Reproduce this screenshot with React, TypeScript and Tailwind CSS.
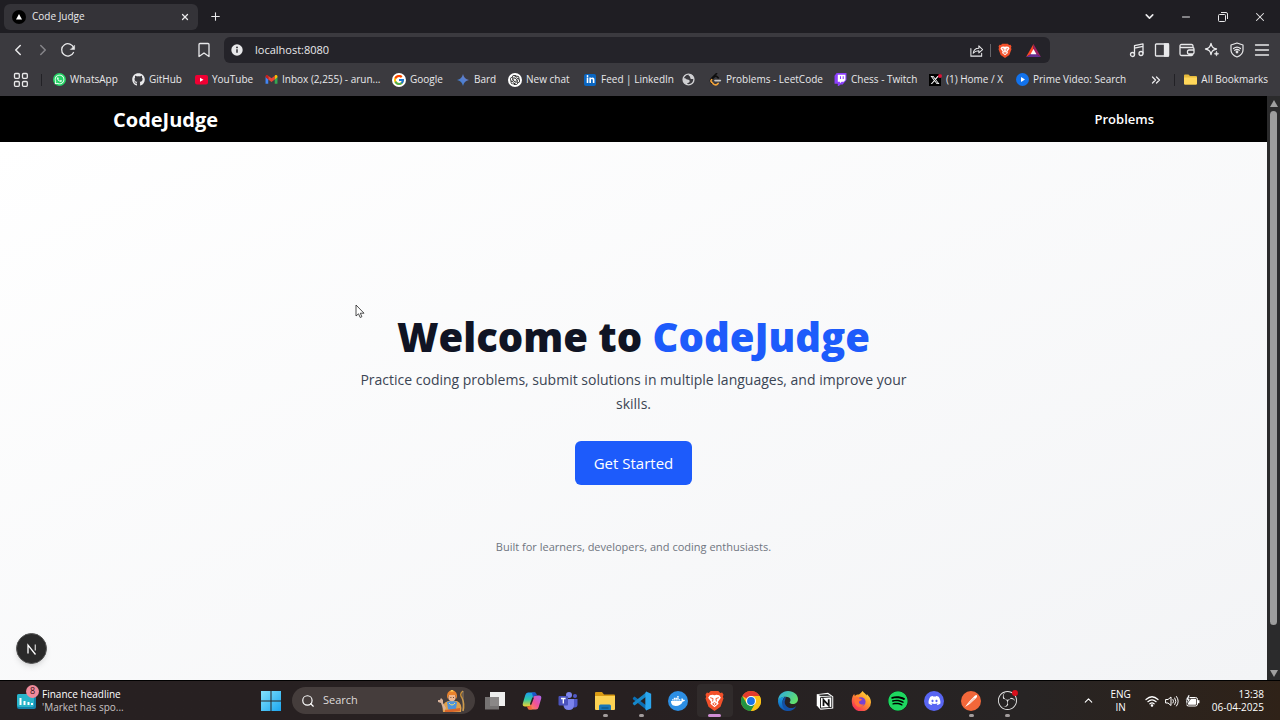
import type { ReactNode } from "react";
import { ChevronDown, ChevronLeft, ChevronRight, ChevronUp, Minus, Plus, X, Search } from "lucide-react";
import { FcGoogle } from "react-icons/fc";
import { FaGithub, FaLinkedinIn, FaSpotify, FaDocker, FaDiscord, FaWhatsapp } from "react-icons/fa";
import { SiOpenai, SiObsstudio } from "react-icons/si";

const XLogo = () => (
  <span className="relative flex size-3 items-center justify-center bg-black text-white">
    <svg viewBox="0 0 24 24" className="size-[10px]" fill="currentColor">
      <path d="M18.2 2.3h3.3l-7.2 8.2 8.5 11.3h-6.7l-5.2-6.8-6 6.8H1.700l7.700-8.800L1.200 2.300H8l4.700 6.200zm-1.100 17.500h1.800L7.100 4.100h-2z" />
    </svg>
    <span className="absolute -right-px top-0 size-1 rounded-full bg-[#d9163a]" />
  </span>
);

const WhatsApp = () => (
  <span className="flex size-[13px] items-center justify-center rounded-full bg-[#25d366] text-white">
    <FaWhatsapp size={11} />
  </span>
);

const YouTube = () => (
  <svg viewBox="0 0 13 13" className="size-[13px]">
    <rect x="0" y="2" width="13" height="9.500" rx="2" fill="#f00033" />
    <path d="M5 4.700v4l3.500-2z" fill="#fff" />
  </svg>
);

const Gmail = () => (
  <svg viewBox="0 0 24 24" className="size-[13px]">
    <path d="M1 6.500V20h5V10.500z" fill="#4285f4" />
    <path d="M23 6.500V20h-5V10.500z" fill="#34a853" />
    <path d="M6 5v7l6 4.500 6-4.500V5l-6 4.600z" fill="#ea4335" />
    <path d="M1 6.500c0-2.600 2.600-3.500 4.300-2.200L6 5v7L1 8z" fill="#c5221f" />
    <path d="M23 6.500c0-2.600-2.600-3.500-4.300-2.200L18 5v7l5-4z" fill="#fbbc04" />
  </svg>
);

const Bard = () => (
  <svg viewBox="0 0 24 24" className="size-3">
    <defs>
      <linearGradient id="bard" x1="0" y1="1" x2="1" y2="0">
        <stop offset="0" stopColor="#2f7fd8" />
        <stop offset="1" stopColor="#7a80c8" />
      </linearGradient>
    </defs>
    <path d="M12 0c1.500 7 5 10.500 12 12-7 1.500-10.500 5-12 12-1.500-7-5-10.500-12-12 7-1.500 10.500-5 12-12z" fill="url(#bard)" />
  </svg>
);

const OpenAI = () => (
  <span className="flex size-[14px] items-center justify-center rounded-full bg-white text-black">
    <SiOpenai size={10} />
  </span>
);

const LinkedIn = () => (
  <span className="flex size-3 items-center justify-center rounded-xs bg-[#0a66c2] text-white">
    <FaLinkedinIn size={9} />
  </span>
);

const Globe = () => (
  <svg viewBox="0 0 24 24" className="size-[13px]">
    <circle cx="12" cy="12" r="10" fill="#3b3a3f" stroke="#d0d0d3" strokeWidth="2.500" />
    <path d="M3 9c4 0 4 2 7 3s5 1 4 4-3 1-4 3l-1 2C5 20 2 17 2 12zM14 2c-3 2-2 3 0 4s0 4 3 5 3-1 5 0C22 6 18 3 14 2z" fill="#d0d0d3" />
  </svg>
);

const Leet = () => (
  <svg viewBox="0 0 24 24" className="size-[13px]">
    <path d="M14 1 5 10c-3 3-3 6 0 9" fill="none" stroke="#0e0e0e" strokeWidth="3" strokeLinecap="round" />
    <path d="m17 19-2 2c-2 2-4 1-6 0l-4-4" fill="none" stroke="#f2a33a" strokeWidth="3" strokeLinecap="round" />
    <path d="m17 9-2-2c-2-2-4-1-5 0l-5 5" fill="none" stroke="#0e0e0e" strokeWidth="3" strokeLinecap="round" />
    <path d="M5 12c-2 2-2 4 0 5" fill="none" stroke="#f2a33a" strokeWidth="3" strokeLinecap="round" />
    <path d="M11 14h10" stroke="#c8c8c8" strokeWidth="3" strokeLinecap="round" />
  </svg>
);

const Twitch = () => (
  <svg viewBox="0 0 24 24" className="size-[13px]">
    <path d="M1 5 5 0h18v13l-7 8h-4l-3 3H7v-4H1z" fill="#8c3ffc" />
    <path d="M7 3h14v10l-3 3h-4l-3 3v-3H7z" fill="#fff" />
    <path d="M12 6v5M17 6v5" stroke="#8c3ffc" strokeWidth="2" />
  </svg>
);

const Prime = () => (
  <svg viewBox="0 0 13 13" className="size-[13px]">
    <circle cx="6.500" cy="6.500" r="6.500" fill="#1272ec" />
    <path d="M5 4v5l4-2.500z" fill="#fff" />
  </svg>
);

const Folder = () => (
  <svg viewBox="0 0 13 11" className="h-[11px] w-[13px]">
    <path d="M0 1.500Q0 .5 1 .5h3.500l1.500 1.500h6q1 0 1 1v6.500q0 1-1 1H1q-1 0-1-1z" fill="#e5b93c" />
    <path d="M0 3.500h13v6q0 1-1 1H1q-1 0-1-1z" fill="#ffd75a" />
  </svg>
);

const bookmarks: { label: string; name?: string; icon: ReactNode; width: string }[] = [
  { label: "WhatsApp", icon: <WhatsApp />, width: "w-[79px]" },
  { label: "GitHub", icon: <FaGithub size={13} />, width: "w-[63px]" },
  { label: "YouTube", icon: <YouTube />, width: "w-[70px]" },
  { label: "Inbox (2,255) - arun...", icon: <Gmail />, width: "w-[128px]" },
  {
    label: "Google",
    icon: <span className="flex size-[14px] items-center justify-center rounded-full bg-white"><FcGoogle size={12} /></span>,
    width: "w-[64px]",
  },
  { label: "Bard", icon: <Bard />, width: "w-[52px]" },
  { label: "New chat", icon: <OpenAI />, width: "w-[75px]" },
  { label: "Feed | LinkedIn", icon: <LinkedIn />, width: "w-[98px]" },
  { label: "", name: "Saved page", icon: <Globe />, width: "w-[27px]" },
  { label: "Problems - LeetCode", icon: <Leet />, width: "w-[125px]" },
  { label: "Chess - Twitch", icon: <Twitch />, width: "w-[95px]" },
  { label: "(1) Home / X", icon: <XLogo />, width: "w-[87px]" },
  { label: "Prime Video: Search", icon: <Prime />, width: "w-[112px]" },
];

const stroke = { fill: "none", stroke: "currentColor", strokeWidth: 1.3, strokeLinecap: "round", strokeLinejoin: "round" } as const;

const ReloadIcon = () => (
  <svg viewBox="0 0 16 16" className="size-4" {...stroke}>
    <path d="M13.500 10.500A6.200 6.200 0 1 1 13.800 6" />
    <path d="M14.600 3.500v4h-4z" fill="currentColor" strokeWidth=".5" />
  </svg>
);
const BookmarkIcon = () => (
  <svg viewBox="0 0 16 16" className="size-4" {...stroke}>
    <path d="M3 2.500q0-1 1-1h8q1 0 1 1v12l-5-3.500-5 3.500z" />
  </svg>
);
const InfoIcon = () => (
  <svg viewBox="0 0 12 12" className="size-3 shrink-0">
    <circle cx="6" cy="6" r="5.700" fill="#e8e8ea" />
    <path d="M6 5.300v3.400" stroke="#242329" strokeWidth="1.400" />
    <circle cx="6" cy="3.400" r=".9" fill="#242329" />
  </svg>
);
const ShareIcon = () => (
  <svg viewBox="0 0 16 16" className="size-[15px]" {...stroke} strokeWidth={1.100}>
    <path d="M2 6v8h11.500v-3" />
    <path d="M4.500 11c.3-3.500 2.500-5.500 6-5.500V3l4 4-4 3.500V8.300c-2.500 0-4.500.7-6 2.700z" />
  </svg>
);
const BatIcon = () => (
  <svg viewBox="0 0 16 14" className="h-[13px] w-[15px]">
    <path d="M8 0 0 14l8-4.500z" fill="#ff4724" />
    <path d="M8 0l8 14-8-4.500z" fill="#9e1f63" />
    <path d="M0 14h16L8 9z" fill="#662d91" />
    <path d="M8 5.500 4.800 11h6.400z" fill="#fff" />
  </svg>
);
const MusicIcon = () => (
  <svg viewBox="0 0 16 16" className="size-4" {...stroke}>
    <path d="M5.500 12.500V3.700L14 1.800v9.200M5.500 6.200 14 4.300" />
    <circle cx="3.500" cy="12.500" r="2" />
    <circle cx="12" cy="11.500" r="2" />
  </svg>
);
const PanelIcon = () => (
  <svg viewBox="0 0 16 16" className="size-4" {...stroke}>
    <rect x="1.500" y="2" width="13" height="12" rx=".8" />
    <path d="M10.500 2h4v12h-4z" fill="currentColor" />
  </svg>
);
const WalletIcon = () => (
  <svg viewBox="0 0 16 16" className="size-4" {...stroke}>
    <path d="M14 5.500V4q0-1.500-1.500-1.500h-10Q1 2.500 1 4v8q0 1.500 1.500 1.500h10Q14 13.500 14 12M1 4.500q.3 1 1.500 1H13.500q1.500 0 1.500 1.500v3.500q0 1.500-1.500 1.500H10q-1.500 0-1.500-1.500V9.500Q8.500 8 10 8h5" />
  </svg>
);
const SparkIcon = () => (
  <svg viewBox="0 0 16 16" className="size-4" {...stroke}>
    <path d="M7 1.500c.7 3.500 1.800 4.600 5.500 5.500C8.800 7.900 7.700 9 7 12.500 6.300 9 5.200 7.900 1.500 7 5.200 6.100 6.300 5 7 1.500z" />
    <path d="M12.500 9.500c.3 1.500.8 2 2.300 2.300-1.500.3-2 .8-2.300 2.300-.3-1.500-.8-2-2.300-2.300 1.500-.3 2-.8 2.300-2.300z" fill="currentColor" strokeWidth=".6" />
  </svg>
);
const VpnIcon = () => (
  <svg viewBox="0 0 16 16" className="size-4" {...stroke} strokeWidth={1.200}>
    <path d="M8 1 14 3v5c0 3.500-2.500 5.700-6 7-3.500-1.300-6-3.500-6-7V3z" />
    <path d="M4.500 6.500q3.500-2.800 7 0M5.700 8.300q2.300-1.800 4.600 0" />
    <circle cx="8" cy="10" r=".8" fill="currentColor" />
  </svg>
);
const MenuIcon = () => (
  <svg viewBox="0 0 16 16" className="size-4" {...stroke}>
    <path d="M1.500 3h13M1.500 8h13M1.500 13h13" />
  </svg>
);
const AppsIcon = () => (
  <svg viewBox="0 0 16 16" className="size-4" {...stroke}>
    <rect x="1.500" y="1.500" width="4.800" height="4.800" rx="1" />
    <rect x="9.500" y="1.500" width="4.800" height="4.800" rx="1" />
    <rect x="1.500" y="9.500" width="4.800" height="4.800" rx="1" />
    <rect x="9.500" y="9.500" width="4.800" height="4.800" rx="1" />
  </svg>
);
const MoreIcon = () => (
  <svg viewBox="0 0 10 10" className="size-[10px]" {...stroke}>
    <path d="M1.500 2 4.500 5l-3 3M5.500 2l3 3-3 3" />
  </svg>
);
const RestoreIcon = () => (
  <svg viewBox="0 0 10 10" className="size-[10px]" fill="none" stroke="currentColor">
    <rect x=".5" y="2.500" width="7" height="7" rx="1" />
    <path d="M3 .5h5q1.500 0 1.500 1.500v5" />
  </svg>
);
const BraveLion = ({ className }: { className: string }) => (
  <svg viewBox="0 0 20 22" className={className}>
    <path d="M6 1h8l2 2 2-.3L19.500 5l-.7 2 .7 2-3.200 8.500L10 22l-6.300-4.500L.5 9l.7-2-.7-2L2 2.700 4 3z" fill="#f2502a" />
    <path d="M5 5.500 8 5l2 .5L12 5l3 .5L16.700 8l-3.200 4.500.8 2L10 18l-4.300-3.500.8-2L3.300 8z" fill="#fff" />
    <path d="m5.500 8 3 1-.5 3M14.500 8l-3 1 .5 3M8 14.500l2-1.200 2 1.200-2 1.500z" stroke="#f2502a" strokeWidth="1" fill="none" />
  </svg>
);

function IconButton({ label, children }: { label: string; children: ReactNode }) {
  return (
    <button type="button" aria-label={label} className="flex size-5 shrink-0 items-center justify-center">
      {children}
    </button>
  );
}

function BrowserChrome() {
  return (
    <header className="text-[#e9e9eb]">
      <div className="flex h-[33px] items-center bg-[#1f1e23] pl-1">
        <div className="flex h-[26px] w-[194px] items-center rounded-md bg-[#343338] pl-2 pr-[3px]">
          <svg viewBox="0 0 14 14" className="size-[14px]">
            <circle cx="7" cy="7" r="7" fill="#000" />
            <path d="M7 4 10 9.500H4z" fill="#fff" />
          </svg>
          <span className="ml-[6px] flex-1 text-[10px]">Code Judge</span>
          <IconButton label="Close tab"><X size={10} strokeWidth={3} /></IconButton>
        </div>
        <div className="ml-[7px]"><IconButton label="New tab"><Plus size={13} strokeWidth={2} /></IconButton></div>
        <div className="ml-auto flex items-center gap-[17px] pr-[10px]">
          <IconButton label="Search tabs"><ChevronDown size={13} strokeWidth={3} /></IconButton>
          <IconButton label="Minimize"><Minus size={12} strokeWidth={2} /></IconButton>
          <IconButton label="Restore"><RestoreIcon /></IconButton>
          <IconButton label="Close window"><X size={14} strokeWidth={1.800} /></IconButton>
        </div>
      </div>
      <div className="flex h-[34px] items-center bg-[#3b3a3f] pl-2 pr-2">
        <div className="flex items-center gap-[5px]">
          <IconButton label="Back"><ChevronLeft size={18} strokeWidth={2} /></IconButton>
          <span className="text-[#86858a]"><IconButton label="Forward"><ChevronRight size={18} strokeWidth={2} /></IconButton></span>
          <IconButton label="Reload"><ReloadIcon /></IconButton>
        </div>
        <div className="ml-[116px]"><IconButton label="Bookmark this page"><BookmarkIcon /></IconButton></div>
        <div className="ml-[10px] mr-[77px] flex h-[26px] flex-1 items-center gap-[5px] rounded-md bg-[#242329] pl-[7px] pr-[7px]">
          <InfoIcon />
          <input aria-label="Address" defaultValue="localhost:8080" className="ml-[7px] min-w-0 flex-1 bg-transparent text-[11px] outline-none" />
          <IconButton label="Share"><ShareIcon /></IconButton>
          <span className="-mx-px h-[13px] w-px bg-[#66656a]" />
          <IconButton label="Brave Shields"><BraveLion className="h-[15px] w-[14px]" /></IconButton>
          <span className="ml-[3px]"><IconButton label="Rewards"><BatIcon /></IconButton></span>
        </div>
        <div className="flex items-center gap-[5px]">
          <IconButton label="Media"><MusicIcon /></IconButton>
          <IconButton label="Sidebar"><PanelIcon /></IconButton>
          <IconButton label="Wallet"><WalletIcon /></IconButton>
          <IconButton label="Assistant"><SparkIcon /></IconButton>
          <IconButton label="VPN"><VpnIcon /></IconButton>
          <IconButton label="Menu"><MenuIcon /></IconButton>
        </div>
      </div>
      <nav aria-label="Bookmarks" className="flex h-[29px] items-center bg-[#3b3a3f] pb-1 pl-[11px] pr-3 text-[10px] whitespace-nowrap">
        <IconButton label="Apps"><AppsIcon /></IconButton>
        <span className="mx-[10px] h-3 w-px bg-[#222126]" />
        {bookmarks.map((b) => (
          <a key={b.label} href="#" aria-label={b.name} className={`flex shrink-0 items-center gap-1 ${b.width}`}>
            <span className="flex w-[14px] shrink-0 justify-center">{b.icon}</span>
            {b.label}
          </a>
        ))}
        <div className="ml-auto flex items-center">
          <IconButton label="More bookmarks"><MoreIcon /></IconButton>
          <span className="ml-2 mr-[9px] h-3 w-px bg-[#222126]" />
          <a href="#" className="flex items-center gap-1"><Folder />All Bookmarks</a>
        </div>
      </nav>
    </header>
  );
}

function Page() {
  return (
    <div className="flex min-w-0 flex-1 flex-col">
      <header className="flex h-[46px] items-center justify-between bg-black pl-[113px] pr-[113px] pt-[2px] text-white">
        <a href="#" className="text-[20px] font-bold">CodeJudge</a>
        <a href="#" className="text-[13px] font-semibold">Problems</a>
      </header>
      <main className="relative flex flex-1 flex-col items-center bg-linear-to-br from-white to-[#f3f4f6] pt-[171px] text-center">
        <h1 className="text-[40px] leading-[48px] font-extrabold text-[#101424]">
          Welcome to <span className="text-[#1d5bfb]">CodeJudge</span>
        </h1>
        <p className="mt-[7px] w-[576px] text-[14px] leading-6 text-[#3b4554]">
          Practice coding problems, submit solutions in multiple languages, and improve your skills.
        </p>
        <a href="#" className="mt-[25px] flex h-11 w-[117px] items-center justify-center rounded-md bg-[#1d5bfb] text-[15px] font-medium text-white">
          Get Started
        </a>
        <p className="mt-[52px] text-[11px] leading-5 text-[#6f7580]">Built for learners, developers, and coding enthusiasts.</p>
        <button
          type="button"
          aria-label="Next.js dev tools"
          className="absolute bottom-4 left-4 flex size-[31px] items-center justify-center rounded-full border border-[#555] bg-[#2a2a2a] shadow-md"
        >
          <svg viewBox="0 0 14 14" className="size-[14px]" fill="none" stroke="#fff" strokeWidth="1.300">
            <path d="M3 11.500V3l7.500 9.500" />
            <path d="M10.300 2.500v6" strokeOpacity=".75" />
          </svg>
        </button>
        <svg viewBox="0 0 10 15" className="absolute left-[355px] top-[162px] h-[15px] w-[10px]" fill="#fff" stroke="#222" strokeWidth=".8">
          <path d="M1 1v11l2.500-2.200L5.200 13.500l1.700-.8-1.600-3.500H9z" />
        </svg>
      </main>
    </div>
  );
}

function Scrollbar() {
  return (
    <div aria-hidden="true" className="flex w-[13px] flex-col items-center bg-[#2b2b2c]">
      <svg viewBox="0 0 12 15" className="h-[15px] w-3"><path d="M2 11 6 4l4 7z" fill="#a0a0a0" /></svg>
      <div className="w-[7px] flex-[514] rounded-full bg-[#9d9d9d]" />
      <div className="flex-[40]" />
      <svg viewBox="0 0 12 15" className="h-[15px] w-3"><path d="M2 5h8l-4 7z" fill="#a0a0a0" /></svg>
    </div>
  );
}

const WindowsLogo = () => (
  <svg viewBox="0 0 20 20" className="size-5">
    <defs>
      <linearGradient id="win" x1="0" y1="0" x2="1" y2="1">
        <stop offset="0" stopColor="#84e3fb" />
        <stop offset="1" stopColor="#1ba5ef" />
      </linearGradient>
    </defs>
    <path d="M0 0h9.500v9.500H0zM10.500 0H20v9.500h-9.500zM0 10.500h9.500V20H0zM10.500 10.500H20V20h-9.500z" fill="url(#win)" />
  </svg>
);
const TaskView = () => (
  <svg viewBox="0 0 22 20" className="h-5 w-[22px]">
    <rect x="6" y="1" width="15" height="14" fill="#eee" />
    <rect x="1" y="6" width="14" height="12.500" fill="#7e7b7b" fillOpacity=".9" />
  </svg>
);
const Copilot = () => (
  <svg viewBox="0 0 20 20" className="size-5">
    <defs>
      <linearGradient id="cpA" x1="0" y1="0" x2="0" y2="1">
        <stop offset="0" stopColor="#1b9bf0" />
        <stop offset=".5" stopColor="#31c9a4" />
        <stop offset="1" stopColor="#f5d22d" />
      </linearGradient>
      <linearGradient id="cpB" x1="1" y1="0" x2="0" y2="1">
        <stop offset="0" stopColor="#a869f3" />
        <stop offset=".5" stopColor="#f0509b" />
        <stop offset="1" stopColor="#ff9a3c" />
      </linearGradient>
    </defs>
    <path d="M6 1.500h7.500L9.500 12q-.8 3.500-3.500 3.500H3Q.2 15.500.8 12.500L3.300 4Q4 1.500 6 1.500z" fill="url(#cpA)" />
    <path d="M14 18.500H6.500L10.500 8q.8-3.500 3.500-3.500h3q2.800 0 2.200 3L16.700 16q-.7 2.500-2.700 2.500z" fill="url(#cpB)" />
    <path d="M10 1.500h2.500q1.500 0 2 1.500l.6 1.500H14q-2.300 0-3 2z" fill="#1c55c8" />
    <path d="M10 18.500H7.500q-1.500 0-2-1.500l-.6-1.500H6q2.300 0 3-2z" fill="#ef6a3c" />
    <path d="m11 7-2.200 6" stroke="#272021" strokeWidth="1.600" strokeLinecap="round" />
  </svg>
);
const Teams = () => (
  <svg viewBox="0 0 20 20" className="size-5">
    <circle cx="11" cy="4" r="3" fill="#7b83eb" />
    <circle cx="17" cy="5" r="2" fill="#5059c9" />
    <path d="M14 8h5.500v5.500q0 3-3 3H14z" fill="#5059c9" />
    <path d="M5.500 8H16v6q0 5-5.200 5T5.500 14z" fill="#7b83eb" />
    <rect x=".5" y="5" width="9.500" height="9.500" rx="1" fill="#4b53bc" />
    <path d="M3 7.500h4.600M5.300 7.500v5" stroke="#fff" strokeWidth="1.300" />
  </svg>
);
const Explorer = () => (
  <svg viewBox="0 0 22 20" className="h-5 w-[22px]">
    <path d="M1 2q0-1 1-1h6l2 2.500h10q1 0 1 1V8H1z" fill="#d99b14" />
    <path d="M1 5h20v13q0 1-1 1H2q-1 0-1-1z" fill="#fcd253" />
    <path d="M5 19v-4q0-1.500 1.500-1.500h9Q17 13.500 17 15v4z" fill="#1976b8" />
    <path d="M7.500 17h7" stroke="#0e527f" strokeWidth="1.200" />
  </svg>
);
const VsCode = () => (
  <svg viewBox="0 0 24 24" className="size-5">
    <path d="M1 8.500 3 6.700 18 18v5L1.200 9.800z" fill="#0b6fb5" />
    <path d="M1 15.500 3 17.300 18 6V1L1.200 14.200z" fill="#1688ca" />
    <path d="M17 .5 23 3.300v17.400L17 23.500l-1-2V2.500z" fill="#2ba6ee" />
  </svg>
);
const Chrome = () => (
  <svg viewBox="0 0 24 24" className="size-5">
    <circle cx="12" cy="12" r="12" fill="#fbc116" />
    <path d="M12 12 1.600 6A12 12 0 0 1 22.400 6z" fill="#e33b2e" />
    <path d="M1.600 6A12 12 0 0 0 12 24l5.200-9-10.400 0z" fill="#229342" />
    <path d="M12 24A12 12 0 0 0 22.400 6H12l5.200 9z" fill="#fbc116" />
    <circle cx="12" cy="12" r="6" fill="#fff" />
    <circle cx="12" cy="12" r="4.700" fill="#1a73e8" />
  </svg>
);
const Edge = () => (
  <svg viewBox="0 0 24 24" className="size-5">
    <defs>
      <linearGradient id="edA" x1="0" y1="0" x2="1" y2=".5">
        <stop offset="0" stopColor="#2aa8e8" />
        <stop offset="1" stopColor="#61df6e" />
      </linearGradient>
      <linearGradient id="edB" x1="0" y1="0" x2="0" y2="1">
        <stop offset="0" stopColor="#1b9de2" />
        <stop offset="1" stopColor="#0d55b4" />
      </linearGradient>
    </defs>
    <path d="M0 12C0 5 5.500 0 12 0c7 0 12 4.500 12 9.500 0 4-3 6-6 6-2.500 0-4-.8-4-1.800 0-.8 1-1.200 1-3C15 8.500 12.500 7 9 7c-4 0-8 2-9 5z" fill="url(#edA)" />
    <path d="M0 12c1-4 5-5 9-5-2.500 1-4 4-3.500 7.500C6 19.500 10 23 15 23.500 7 25.500 0 20 0 12z" fill="url(#edB)" />
    <path d="M8.500 11c-2 5 3 9.500 7 9.500 3 0 5-1 6.500-2.500C20 22 16.500 24 12.500 24 7 23 4 18 5.500 13c.5-3 2-5 4.500-6-.5 1-1 2-1.500 4z" fill="#1450a4" />
  </svg>
);
const Notion = () => (
  <svg viewBox="0 0 24 24" className="size-[18px]">
    <path d="M1 3 16 1l7 5v16L6 23.500 1 18z" fill="#fff" />
    <path d="M6 7.500 21 6.500v14L6 21.500z" fill="#fff" stroke="#111" strokeWidth="1.200" />
    <path d="M10 18.500V10.500l7 7.500V9.500" fill="none" stroke="#111" strokeWidth="2.400" />
    <path d="M3 3.700 15.500 2.700 19.500 5 6.500 5.800z" fill="#333" />
  </svg>
);
const Firefox = () => (
  <svg viewBox="0 0 24 24" className="size-5">
    <defs>
      <linearGradient id="ff" x1="1" y1="0" x2=".2" y2="1">
        <stop offset="0" stopColor="#fff044" />
        <stop offset=".45" stopColor="#ff9a2b" />
        <stop offset="1" stopColor="#f5265a" />
      </linearGradient>
    </defs>
    <path d="M14 0c1 2 4 3.500 5 5.500V3.500c3 3 5 6 5 10A11.500 11 0 0 1 1 13.500C.5 9 2 5 4 3.500c0 1 .3 1.700.7 2.500C6 4.500 8 4 9.500 4.200 11 3 12.500 2 14 0z" fill="url(#ff)" />
    <circle cx="12" cy="13" r="5.500" fill="#7742d3" />
    <path d="M4.700 8C7 6.500 9 7.500 10 9c2 .2 3 .7 3 1.500-1 1.500-3 1-3.500 2.500-.3 3 3.500 4 6 2.500-1 3-4 4-6.500 3.500C5 18 3 12 4.700 8z" fill="#ff7139" />
  </svg>
);
const Postman = () => (
  <svg viewBox="0 0 20 20" className="size-5">
    <circle cx="10" cy="10" r="10" fill="#f2673a" />
    <path d="m4 16 3.800-5L13.500 5q2-1.500 2.500-.5t-.8 2.500L9 12.700z" fill="#fff" />
    <path d="m8 12.500 5.500-5.500" stroke="#f2673a" strokeWidth=".6" />
  </svg>
);
const Archer = () => (
  <svg viewBox="0 0 30 22" className="h-[22px] w-[30px]">
    <path d="M26 1q-4 3-1 7 3 6 1 13" stroke="#c98f35" strokeWidth="1.400" fill="none" />
    <path d="M26 1v20" stroke="#d9c39a" strokeWidth=".5" />
    <path d="M6 22q-2-9 5-11h9q6 3 4 11z" fill="#e2a04a" />
    <path d="M10 12q5-2 10 0l-1 7-4 3-4-3z" fill="#4f93dc" />
    <circle cx="15" cy="7.500" r="3.700" fill="#f0b78e" />
    <path d="M10 9Q9 1 15 0q6 1 5 9l-2-4h-6z" fill="#e9832c" />
    <path d="M13 1.500h4L15-.5z" fill="#ffd75a" />
    <path d="M12 13q3 4 6 0" stroke="#f6dc6c" strokeWidth="1" fill="none" />
    <path d="m8 20 8-1 7-1v3l-8 1H8z" fill="#d9662a" />
    <path d="M7 21 4 13l-3-1v-2h2l1-2 2 2v3l3 5z" fill="#d9b39b" />
    <path d="M13.500 7.500h.8M16 7.500h.8" stroke="#3b2417" strokeWidth=".9" />
  </svg>
);

const apps: { name: string; icon: ReactNode; mark?: "open" | "active" }[] = [
  { name: "Task view", icon: <TaskView /> },
  { name: "Copilot", icon: <Copilot /> },
  { name: "Teams", icon: <Teams /> },
  { name: "File Explorer", icon: <Explorer />, mark: "open" },
  { name: "Visual Studio Code", icon: <VsCode />, mark: "open" },
  {
    name: "Docker",
    icon: <span className="flex size-5 items-center justify-center rounded-full bg-[#2c8ee3] text-white"><FaDocker size={14} /></span>,
  },
  { name: "Brave", icon: <BraveLion className="h-[21px] w-[19px]" />, mark: "active" },
  { name: "Chrome", icon: <Chrome /> },
  { name: "Edge", icon: <Edge /> },
  { name: "Notion", icon: <Notion /> },
  { name: "Firefox", icon: <Firefox /> },
  { name: "Spotify", icon: <span className="rounded-full bg-black"><FaSpotify size={20} color="#1ed760" /></span> },
  {
    name: "Discord",
    icon: <span className="flex size-5 items-center justify-center rounded-full bg-[#5865f2] text-white"><FaDiscord size={13} /></span>,
  },
  { name: "Postman", icon: <Postman />, mark: "open" },
  {
    name: "OBS Studio",
    icon: (
      <span className="relative">
        <SiObsstudio size={19} color="#e6e6e6" />
        <span className="absolute -right-px -top-px size-[6px] rounded-full bg-[#d8101c]" />
      </span>
    ),
    mark: "open",
  },
];

function Taskbar() {
  return (
    <footer className="flex h-10 items-center border-t border-black bg-linear-to-r from-[#272021] from-50% via-[#272424] via-80% to-[#2f2218] text-white">
      <button type="button" className="flex w-[252px] items-center pl-[17px] text-left">
        <span className="relative">
          <svg viewBox="0 0 19 16" className="h-4 w-[19px]">
            <rect width="19" height="15" y="1" rx="2" fill="#1583ac" />
            <rect width="17" height="13" y="1" rx="2" fill="#27b4ca" />
            <path d="M3.500 12V5M7.500 12V8M11.500 12V9M15 12v-2" stroke="#fff" strokeWidth="2" />
          </svg>
          <span className="absolute -top-2 left-[9px] flex size-[13px] items-center justify-center rounded-full bg-[#f08a9b] text-[9px] text-[#3a1519]">8</span>
        </span>
        <span className="ml-[6px] text-[10px] leading-[13px]">
          Finance headline
          <span className="block text-[#c9c5c5]">'Market has spo...</span>
        </span>
      </button>
      <button type="button" aria-label="Start" className="flex w-10 items-center justify-center pr-[2px]"><WindowsLogo /></button>
      <label className="flex h-[27px] w-[183px] items-center gap-2 rounded-full bg-[#453d3c] pl-[9px] pr-2">
        <Search size={14} strokeWidth={2} />
        <input aria-label="Search" placeholder="Search" className="w-0 min-w-0 flex-1 bg-transparent text-[11px] outline-none placeholder:text-[#dedada]" />
        <Archer />
      </label>
      <div className="ml-[2px] grid h-full w-[549px] grid-cols-15">
        {apps.map((a) => (
          <button
            key={a.name}
            type="button"
            aria-label={a.name}
            className={`relative my-[3px] flex items-center justify-center rounded-sm ${a.mark === "active" ? "bg-[#302b2b]" : ""}`}
          >
            {a.icon}
            {a.mark === "open" && <span className="absolute bottom-0 h-[3px] w-[5px] rounded-full bg-[#a29c9c]" />}
            {a.mark === "active" && <span className="absolute bottom-0 h-[3px] w-[13px] rounded-full bg-[#cf8ed4]" />}
          </button>
        ))}
      </div>
      <div className="ml-auto flex items-center pr-4 text-[10px] leading-[13px]">
        <button type="button" aria-label="Hidden icons" className="mr-[15px]"><ChevronUp size={13} strokeWidth={2} /></button>
        <button type="button" className="mr-[14px] text-center">ENG<br />IN</button>
        <button type="button" aria-label="Network, sound and battery" className="mr-3 flex items-center gap-[6px]">
          <svg viewBox="0 0 14 12" className="h-3 w-[14px]" fill="none" stroke="#fff" strokeWidth="1.200" strokeLinecap="round">
            <path d="M1 4.500q6-5.500 12 0M2.900 6.700q4.100-3.800 8.200 0M4.900 8.800q2.100-1.900 4.200 0" />
            <circle cx="7" cy="10.500" r=".7" fill="#fff" />
          </svg>
          <svg viewBox="0 0 14 12" className="h-3 w-[14px]" fill="none" stroke="#fff" strokeWidth="1" strokeLinecap="round" strokeLinejoin="round">
            <path d="M1 4.500h2L6 2v8.500L3 8H1zM8 4.500q1.200 1.700 0 3.500M9.800 3q2.300 3.300 0 6.500M11.500 1.500q3.500 4.700 0 9.500" />
          </svg>
          <svg viewBox="0 0 15 12" className="h-3 w-[15px]">
            <rect x="1.500" y="2.500" width="11" height="8.500" rx="2" fill="none" stroke="#fff" />
            <rect x="2.700" y="3.700" width="8.600" height="6.100" rx="1" fill="#fff" />
            <path d="M13.700 5.200v3" stroke="#fff" strokeWidth="1.500" />
            <path d="M3.500-.5.500 5H2.500L1.500 9.500 5.500 4H3.800L5-.5z" fill="#fff" stroke="#272424" strokeWidth=".7" />
          </svg>
        </button>
        <button type="button" className="text-right">13:38<br />06-04-2025</button>
      </div>
    </footer>
  );
}

export default function App() {
  return (
    <div className="flex min-h-screen flex-col font-['Open_Sans','Noto_Sans',sans-serif]">
      <BrowserChrome />
      <div className="flex flex-1">
        <Page />
        <Scrollbar />
      </div>
      <Taskbar />
    </div>
  );
}
